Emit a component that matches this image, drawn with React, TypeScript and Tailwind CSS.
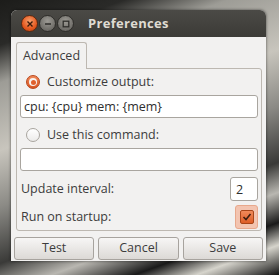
import React, { useState } from "react";

function TitleButton({ kind }: { kind: "close" | "min" | "max" }) {
  if (kind === "close") {
    return (
      <div className="w-[17px] h-[17px] rounded-full bg-[radial-gradient(circle_at_50%_35%,#f7a16e,#e4581f_60%,#b9420f)] border border-[#5a2a12] flex items-center justify-center">
        <svg width="8" height="8" viewBox="0 0 8 8">
          <path d="M1.5 1.5 L6.5 6.5 M6.5 1.5 L1.5 6.5" stroke="#3a1a0a" strokeWidth="1.4" />
        </svg>
      </div>
    );
  }
  return (
    <div className="w-[17px] h-[17px] rounded-full bg-[radial-gradient(circle_at_50%_35%,#9c9a94,#75736e_60%,#5d5b57)] border border-[#2f2e2b] flex items-center justify-center">
      {kind === "min" ? (
        <svg width="8" height="8" viewBox="0 0 8 8">
          <path d="M1 4 H7" stroke="#2f2e2b" strokeWidth="1.4" />
        </svg>
      ) : (
        <svg width="8" height="8" viewBox="0 0 8 8">
          <rect x="1.2" y="1.2" width="5.6" height="5.6" fill="none" stroke="#2f2e2b" strokeWidth="1.3" />
        </svg>
      )}
    </div>
  );
}

function Radio({ checked }: { checked: boolean }) {
  return checked ? (
    <div className="w-[14px] h-[14px] rounded-full bg-[linear-gradient(#f08a5a,#d9531e)] border border-[#b8461c] flex items-center justify-center">
      <div className="w-[8px] h-[8px] rounded-full bg-[#f7f3f0] flex items-center justify-center">
        <div className="w-[5px] h-[5px] rounded-full bg-[#e0602c]" />
      </div>
    </div>
  ) : (
    <div className="w-[14px] h-[14px] rounded-full bg-[linear-gradient(#ffffff,#ecebea)] border border-[#a9a59f]" />
  );
}

export default function App() {
  const [mode, setMode] = useState<"custom" | "command">("custom");
  const [output, setOutput] = useState("cpu: {cpu} mem: {mem}");
  const [command, setCommand] = useState("");
  const [interval, setIntervalValue] = useState("2");
  const [startup, setStartup] = useState(true);

  return (
    <div
      className="w-[279px] h-[275px] overflow-hidden pl-[11px] pt-[10px] bg-[linear-gradient(160deg,#1c1c1a_0%,#2a2a28_12%,#9d9c96_22%,#c8c5bd_40%,#8b8a85_55%,#3a3a38_70%,#b9b7b1_78%,#1a1a1a_86%,#d6d4cc_92%,#111_100%)]"
      style={{ fontFamily: '"Open Sans", "DejaVu Sans", sans-serif' }}
    >
      <div className="w-[255px] h-[251px] flex flex-col rounded-t-[6px] overflow-hidden bg-[#f2f1f0] shadow-[0_0_3px_rgba(0,0,0,0.6)]">
        {/* title bar */}
        <div className="h-[27px] shrink-0 bg-[linear-gradient(#4b4a46,#3c3b37)] flex items-center pl-[10px]">
          <div className="flex gap-[1px]">
            <TitleButton kind="close" />
            <TitleButton kind="min" />
            <TitleButton kind="max" />
          </div>
          <span className="ml-[14px] text-[13px] font-bold text-[#dfdbd2] tracking-[0.3px]">Preferences</span>
        </div>

        {/* notebook */}
        <div className="px-[5px] pr-[4px] pt-[5px]">
          <div className="flex">
            <div className="h-[27px] w-[71px] border border-b-0 border-[#bdb8b1] rounded-t-[3px] bg-[#f2f1f0] flex items-center justify-center text-[12.5px] text-[#3c3c3c] relative z-10 -mb-px">
              Advanced
            </div>
          </div>
          <div className="h-[163px] border border-[#bdb8b1] rounded-b-[3px] rounded-tr-[3px] px-[3px] text-[12.5px] text-[#3c3c3c]">
            <label className="h-[20px] mt-[3px] flex items-center gap-[7px] pl-[6px]" onClick={() => setMode("custom")}>
              <Radio checked={mode === "custom"} />
              <span>Customize output:</span>
            </label>
            <input
              value={output}
              onChange={(e) => setOutput(e.target.value)}
              className="mt-[3px] w-full h-[23px] border border-[#a9a59f] rounded-[3px] bg-white px-[3px] text-[12.5px] text-[#2e2e2e] outline-none"
            />
            <label className="h-[20px] mt-[7px] flex items-center gap-[7px] pl-[6px]" onClick={() => setMode("command")}>
              <Radio checked={mode === "command"} />
              <span>Use this command:</span>
            </label>
            <input
              value={command}
              onChange={(e) => setCommand(e.target.value)}
              className="mt-[3px] w-full h-[23px] border border-[#a9a59f] rounded-[3px] bg-white px-[3px] text-[12.5px] outline-none"
            />
            <div className="mt-[6px] h-[24px] flex items-center justify-between">
              <span className="pl-[1px]">Update interval:</span>
              <input
                value={interval}
                onChange={(e) => setIntervalValue(e.target.value)}
                className="w-[28px] h-[24px] border border-[#a9a59f] rounded-[3px] bg-white px-[5px] text-[12.5px] text-[#2e2e2e] outline-none"
              />
            </div>
            <div className="mt-[4px] h-[24px] flex items-center justify-between">
              <span className="pl-[1px]">Run on startup:</span>
              <button
                onClick={() => setStartup(!startup)}
                className="w-[23px] h-[24px] rounded-[3px] bg-[#f3c4b0] border border-[#e8a88c] flex items-center justify-center"
              >
                <div className="w-[14px] h-[14px] rounded-[2px] bg-[linear-gradient(#f08a5a,#de5d27)] border border-[#a84518] flex items-center justify-center">
                  {startup && (
                    <svg width="10" height="10" viewBox="0 0 10 10">
                      <path d="M1.5 5 L4 7.5 L8.5 2" fill="none" stroke="#3b1e10" strokeWidth="1.6" />
                    </svg>
                  )}
                </div>
              </button>
            </div>
          </div>
        </div>

        {/* buttons */}
        <div className="mt-[6px] px-[3px] flex gap-[4px]">
          {["Test", "Cancel", "Save"].map((label) => (
            <button
              key={label}
              className="flex-1 h-[23px] rounded-[3px] border border-[#a7a39e] bg-[linear-gradient(#f7f6f5,#dcd9d6)] text-[12.5px] text-[#3c3c3c]"
            >
              {label}
            </button>
          ))}
        </div>
      </div>
    </div>
  );
}
